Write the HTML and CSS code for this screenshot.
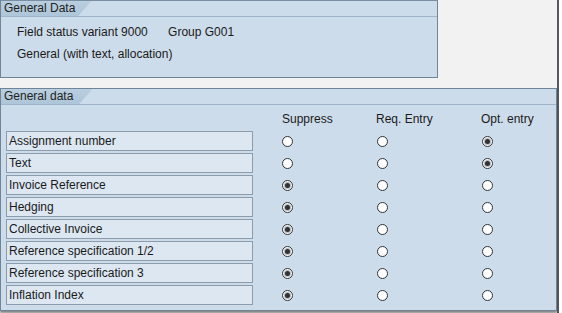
FILE: index.html
```html
<!DOCTYPE html>
<html lang="en">
<head>
    <meta charset="UTF-8">
    <title>Field status group</title>
    <link rel="stylesheet" href="styles.css">
</head>
<body>
    <div class="screen">
        <div class="group top-group">
            <div class="tab"><span>General Data</span></div>
            <div class="info">
                <div class="info-line">
                    <span>Field status variant 9000</span>
                    <span class="group-id">Group G001</span>
                </div>
                <div class="info-line">General (with text, allocation)</div>
            </div>
        </div>

        <div class="group data-group">
            <div class="tab"><span>General data</span></div>
            <div class="grid">
                <div></div>
                <div class="head">Suppress</div>
                <div class="head">Req. Entry</div>
                <div class="head">Opt. entry</div>

                <div class="label">Assignment number</div>
                <div class="cell"><span class="radio"></span></div>
                <div class="cell"><span class="radio"></span></div>
                <div class="cell"><span class="radio on"></span></div>

                <div class="label">Text</div>
                <div class="cell"><span class="radio"></span></div>
                <div class="cell"><span class="radio"></span></div>
                <div class="cell"><span class="radio on"></span></div>

                <div class="label">Invoice Reference</div>
                <div class="cell"><span class="radio on"></span></div>
                <div class="cell"><span class="radio"></span></div>
                <div class="cell"><span class="radio"></span></div>

                <div class="label">Hedging</div>
                <div class="cell"><span class="radio on"></span></div>
                <div class="cell"><span class="radio"></span></div>
                <div class="cell"><span class="radio"></span></div>

                <div class="label">Collective Invoice</div>
                <div class="cell"><span class="radio on"></span></div>
                <div class="cell"><span class="radio"></span></div>
                <div class="cell"><span class="radio"></span></div>

                <div class="label">Reference specification 1/2</div>
                <div class="cell"><span class="radio on"></span></div>
                <div class="cell"><span class="radio"></span></div>
                <div class="cell"><span class="radio"></span></div>

                <div class="label">Reference specification 3</div>
                <div class="cell"><span class="radio on"></span></div>
                <div class="cell"><span class="radio"></span></div>
                <div class="cell"><span class="radio"></span></div>

                <div class="label">Inflation Index</div>
                <div class="cell"><span class="radio on"></span></div>
                <div class="cell"><span class="radio"></span></div>
                <div class="cell"><span class="radio"></span></div>
            </div>
        </div>
    </div>
</body>
</html>
```

FILE: styles.css
```css
* {
    margin: 0;
    padding: 0;
    box-sizing: border-box;
}

body {
    background-color: #ffffff;
    font-family: "Liberation Sans", Arial, sans-serif;
    font-size: 12px;
    color: #1a1a1a;
}

.screen {
    width: 559px;
    height: 313px;
    background-color: #f2f2f2;
    border-right: 2px solid #55595e;
}

/* Group boxes */
.group {
    background-color: #cddcea;
    border: 1px solid #6f8499;
}

.top-group {
    width: 438px;
    height: 78px;
    border-top-color: #7a8ea3;
}

.data-group {
    width: 557px;
    height: 223px;
    margin-top: 10px;
    box-shadow: 0 2px 2px rgba(60, 60, 60, 0.6);
}

/* Tab header with slanted edge */
.tab {
    height: 16px;
    position: relative;
}

.tab span {
    display: inline-block;
    height: 16px;
    line-height: 15px;
    padding: 0 16px 0 3px;
    background: linear-gradient(#b9cedf, #adc5d8);
    clip-path: polygon(0 0, 100% 0, calc(100% - 14px) 100%, 0 100%);
    color: #222;
}

.data-group .tab span {
    padding-right: 19px;
}

.tab::after {
    content: "";
    position: absolute;
    left: 0;
    right: 0;
    bottom: 0;
    height: 1px;
    background-color: #9fb4c8;
}

/* Top info */
.info {
    padding: 4px 0 0 16px;
}

.info-line {
    height: 22px;
    line-height: 22px;
}

.group-id {
    margin-left: 17px;
}

/* Data grid */
.grid {
    display: grid;
    grid-template-columns: 275px 95px 105px 1fr;
    grid-auto-rows: 20px;
    row-gap: 2px;
    padding: 4px 0 0 5px;
}

.head {
    line-height: 20px;
    padding-bottom: 1px;
    margin-bottom: 4px;
}

.grid .head:nth-child(2) {
    margin-left: 1px;
}

.label {
    width: 247px;
    height: 20px;
    line-height: 18px;
    padding-left: 2px;
    background-color: #dce7f2;
    border: 1px solid #8d9bab;
    white-space: nowrap;
}

.cell {
    display: flex;
    align-items: center;
    padding-left: 1px;
}

/* Radio buttons */
.radio {
    width: 11px;
    height: 11px;
    border-radius: 50%;
    border: 1.3px solid #2f3338;
    background-color: #fff;
    position: relative;
}

.radio.on::after {
    content: "";
    position: absolute;
    left: 50%;
    top: 50%;
    width: 5px;
    height: 5px;
    margin: -2.5px 0 0 -2.5px;
    border-radius: 50%;
    background-color: #2f3338;
    box-shadow: 0 0 0 1px #b8b8b8;
}
```
